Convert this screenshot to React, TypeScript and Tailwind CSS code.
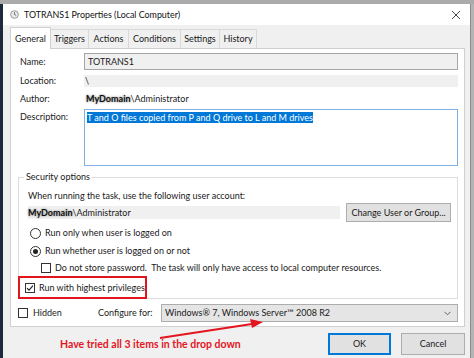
import React from "react";

function Check({ checked = false }: { checked?: boolean }) {
  return (
    <span className="flex h-[10px] w-[10px] shrink-0 items-center justify-center border border-[#333333] bg-white">
      {checked && (
        <svg width="8" height="8" viewBox="0 0 8 8">
          <path d="M1 4.2 L3 6.2 L7 1.6" fill="none" stroke="#222" strokeWidth="1.1" />
        </svg>
      )}
    </span>
  );
}

function Radio({ on = false }: { on?: boolean }) {
  return (
    <span className="flex h-[11px] w-[11px] shrink-0 items-center justify-center rounded-full border border-[#333333] bg-white">
      {on && <span className="h-[5px] w-[5px] rounded-full bg-[#222]" />}
    </span>
  );
}

function Blurred({ children }: { children: React.ReactNode }) {
  return (
    <span className="font-bold text-[#111] [text-shadow:0_0_2px_#9a9a9a,0_0_3px_#bdbdbd]">{children}</span>
  );
}

const tabs = [
  { name: "Triggers", w: "w-[38px]" },
  { name: "Actions", w: "w-[40px]" },
  { name: "Conditions", w: "w-[52px]" },
  { name: "Settings", w: "w-[39px]" },
  { name: "History", w: "w-[37px]" },
];

export default function App() {
  return (
    <div className="relative h-[358px] w-[474px] overflow-hidden whitespace-nowrap bg-[#ababab] font-['Lato',sans-serif] text-[9px] leading-[12px] text-[#1a1a1a]">
      <div className="flex h-full pt-[4px]">
        <div className="w-[3px] shrink-0 bg-[#1d2a3c]" />
        <div className="flex w-[467px] shrink-0 flex-col bg-[#f0f0f0]">
          {/* Title bar */}
          <div className="flex h-[21px] items-center bg-white pl-[7px] pr-[6px]">
            <svg width="9" height="9" viewBox="0 0 10 10" className="mr-[5px]">
              <circle cx="5" cy="5" r="4.3" fill="#e8e8e8" stroke="#8a8a8a" strokeWidth="0.9" />
              <path d="M5 2.4 V5 L6.8 6" fill="none" stroke="#555" strokeWidth="0.9" />
            </svg>
            <span className="text-[8.9px] text-[#111]">TOTRANS1 Properties (Local Computer)</span>
            <svg width="10" height="10" viewBox="0 0 10 10" className="ml-auto mr-[3px]">
              <path d="M1 1 L9 9 M9 1 L1 9" stroke="#333" strokeWidth="0.9" />
            </svg>
          </div>

          <div className="flex flex-1 flex-col pl-[7px] pr-[5px] pt-[2px]">
            {/* Tabs */}
            <div className="relative z-10 flex h-[21px] items-end">
              <div className="mb-[-1px] flex h-[22px] w-[41px] items-center justify-center border border-b-0 border-[#d0d0d0] bg-white">
                General
              </div>
              {tabs.map((t) => (
                <div
                  key={t.name}
                  className={`${t.w} flex h-[19px] items-center justify-center border border-b-0 border-l-0 border-[#d9d9d9] bg-[#f0f0f0]`}
                >
                  {t.name}
                </div>
              ))}
            </div>

            {/* Tab page */}
            <div className="flex h-[279px] flex-col border border-[#d0d0d0] bg-white pl-[9px] pr-[6px]">
              <div className="mt-[4px] flex items-center">
                <span className="w-[64px]">Name:</span>
                <div className="flex h-[17px] flex-1 items-center border border-[#a6a6a6] bg-[#f0f0f0] pl-[3px]">TOTRANS1</div>
              </div>
              <div className="mt-[5px] flex items-center">
                <span className="w-[64px]">Location:</span>
                <div className="flex h-[12px] flex-1 items-center bg-[#f0f0f0] pl-[1px]">\</div>
              </div>
              <div className="mt-[5px] flex h-[14px] items-center">
                <span className="w-[64px]">Author:</span>
                <span className="pl-[2px]">
                  <Blurred>MyDomain</Blurred>\Administrator
                </span>
              </div>
              <div className="mt-[3px] flex items-start">
                <span className="mt-[2px] w-[64px]">Description:</span>
                <div className="h-[57px] flex-1 border border-[#7eb1e0] bg-white pl-[2px] pt-[2px]">
                  <span className="bg-[#0078d7] text-white">T and O files copied from P and Q drive to L and M drives</span>
                </div>
              </div>

              {/* Security options */}
              <div className="relative ml-[-2px] mt-[11px] h-[122px] border border-[#dcdcdc] pl-[9px] pr-[6px]">
                <span className="absolute left-[5px] top-[-7px] bg-white px-[2px]">Security options</span>
                <div className="mt-[12px]">When running the task, use the following user account:</div>
                <div className="mt-[1px] flex items-center">
                  <div className="flex h-[13px] w-[313px] items-center bg-[#f0f0f0]">
                    <Blurred>MyDomain</Blurred>\Administrator
                  </div>
                  <div className="ml-[6px] flex h-[19px] w-[105px] items-center justify-center border border-[#adadad] bg-[#e1e1e1]">
                    Change User or Group...
                  </div>
                </div>
                <div className="mt-[4px] flex h-[14px] items-center gap-[4px] pl-[2px]">
                  <Radio />
                  <span>Run only when user is logged on</span>
                </div>
                <div className="mt-[4px] flex h-[14px] items-center gap-[4px] pl-[2px]">
                  <Radio on />
                  <span>Run whether user is logged on or not</span>
                </div>
                <div className="mt-[3px] flex h-[14px] items-center gap-[4px] pl-[13px]">
                  <Check />
                  <span>Do not store password.&nbsp; The task will only have access to local computer resources.</span>
                </div>
                <div className="relative ml-[-3px] mt-[6px] flex h-[14px] items-center gap-[4px]">
                  <Check checked />
                  <span>Run with highest privileges</span>
                  <span className="pointer-events-none absolute left-[-7px] top-[-5px] h-[23px] w-[129px] border-[2px] border-[#e0161d]" />
                </div>
              </div>

              <div className="ml-[-2px] mt-[5px] flex items-center">
                <div className="flex w-[80px] items-center">
                  <Check />
                  <span className="ml-[5px]">Hidden</span>
                </div>
                <span className="w-[63px]">Configure for:</span>
                <div className="flex h-[18px] flex-1 items-center border border-[#adadad] bg-[#e5e5e5] pl-[3px] pr-[6px]">
                  <span>Windows® 7, Windows Server™ 2008 R2</span>
                  <svg width="7" height="5" viewBox="0 0 7 5" className="ml-auto">
                    <path d="M0.5 0.8 L3.5 3.8 L6.5 0.8" fill="none" stroke="#555" strokeWidth="0.9" />
                  </svg>
                </div>
              </div>
            </div>

            {/* Bottom row */}
            <div className="mt-[6px] flex items-center">
              <span className="ml-[50px] text-[10.5px] font-bold text-[#e3161f]">Have tried all 3 items in the drop down</span>
              <div className="ml-auto flex h-[22px] w-[63px] items-center justify-center border-[2px] border-[#0078d7] bg-[#e1e1e1]">OK</div>
              <div className="ml-[10px] flex h-[22px] w-[64px] items-center justify-center border border-[#adadad] bg-[#e1e1e1]">Cancel</div>
            </div>
          </div>
        </div>
        <div className="w-[4px] shrink-0 border-l border-[#8c8c8c] bg-[#b4b4b4]" />
      </div>

      {/* Annotation arrow */}
      <svg className="pointer-events-none absolute inset-0" width="474" height="358" viewBox="0 0 474 358">
        <line x1="160" y1="338" x2="252" y2="324" stroke="#e3161f" strokeWidth="2" />
        <path d="M263 322 L250 319 L252 328 Z" fill="#e3161f" />
      </svg>
    </div>
  );
}
